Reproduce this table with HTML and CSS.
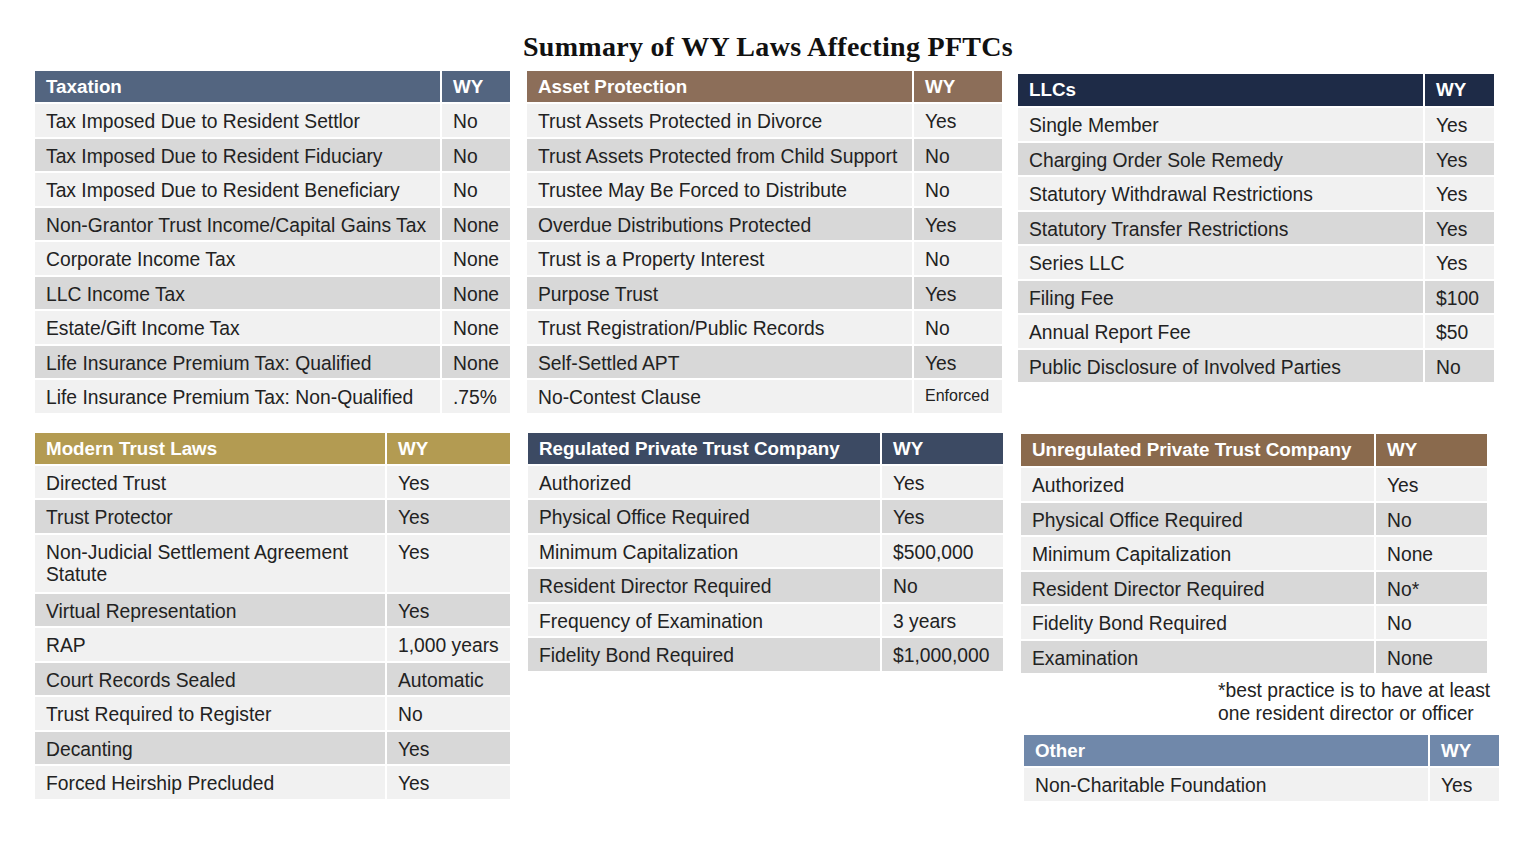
FILE: index.html
```html
<!DOCTYPE html>
<html>
<head>
<meta charset="utf-8">
<link rel="stylesheet" href="styles.css">
</head>
<body>
<h1 class="title">Summary of WY Laws Affecting PFTCs</h1>
<div class="board">
  <div class="col col-1">
    <div class="tbl tbl-tax">
      <div class="hd">Taxation</div><div class="hd">WY</div>
      <div class="c">Tax Imposed Due to Resident Settlor</div><div class="c">No</div>
      <div class="c">Tax Imposed Due to Resident Fiduciary</div><div class="c">No</div>
      <div class="c">Tax Imposed Due to Resident Beneficiary</div><div class="c">No</div>
      <div class="c">Non-Grantor Trust Income/Capital Gains Tax</div><div class="c">None</div>
      <div class="c">Corporate Income Tax</div><div class="c">None</div>
      <div class="c">LLC Income Tax</div><div class="c">None</div>
      <div class="c">Estate/Gift Income Tax</div><div class="c">None</div>
      <div class="c">Life Insurance Premium Tax: Qualified</div><div class="c">None</div>
      <div class="c">Life Insurance Premium Tax: Non-Qualified</div><div class="c">.75%</div>
    </div>
    <div class="tbl tbl-modern">
      <div class="hd">Modern Trust Laws</div><div class="hd">WY</div>
      <div class="c">Directed Trust</div><div class="c">Yes</div>
      <div class="c">Trust Protector</div><div class="c">Yes</div>
      <div class="c tall">Non-Judicial Settlement Agreement Statute</div><div class="c tall">Yes</div>
      <div class="c">Virtual Representation</div><div class="c">Yes</div>
      <div class="c">RAP</div><div class="c">1,000 years</div>
      <div class="c">Court Records Sealed</div><div class="c">Automatic</div>
      <div class="c">Trust Required to Register</div><div class="c">No</div>
      <div class="c">Decanting</div><div class="c">Yes</div>
      <div class="c">Forced Heirship Precluded</div><div class="c">Yes</div>
    </div>
  </div>
  <div class="col col-2">
    <div class="tbl tbl-asset">
      <div class="hd">Asset Protection</div><div class="hd">WY</div>
      <div class="c">Trust Assets Protected in Divorce</div><div class="c">Yes</div>
      <div class="c">Trust Assets Protected from Child Support</div><div class="c">No</div>
      <div class="c">Trustee May Be Forced to Distribute</div><div class="c">No</div>
      <div class="c">Overdue Distributions Protected</div><div class="c">Yes</div>
      <div class="c">Trust is a Property Interest</div><div class="c">No</div>
      <div class="c">Purpose Trust</div><div class="c">Yes</div>
      <div class="c">Trust Registration/Public Records</div><div class="c">No</div>
      <div class="c">Self-Settled APT</div><div class="c">Yes</div>
      <div class="c">No-Contest Clause</div><div class="c small">Enforced</div>
    </div>
    <div class="tbl tbl-reg">
      <div class="hd">Regulated Private Trust Company</div><div class="hd">WY</div>
      <div class="c">Authorized</div><div class="c">Yes</div>
      <div class="c">Physical Office Required</div><div class="c">Yes</div>
      <div class="c">Minimum Capitalization</div><div class="c">$500,000</div>
      <div class="c">Resident Director Required</div><div class="c">No</div>
      <div class="c">Frequency of Examination</div><div class="c">3 years</div>
      <div class="c">Fidelity Bond Required</div><div class="c">$1,000,000</div>
    </div>
  </div>
  <div class="col col-3">
    <div class="tbl tbl-llc">
      <div class="hd">LLCs</div><div class="hd">WY</div>
      <div class="c">Single Member</div><div class="c">Yes</div>
      <div class="c">Charging Order Sole Remedy</div><div class="c">Yes</div>
      <div class="c">Statutory Withdrawal Restrictions</div><div class="c">Yes</div>
      <div class="c">Statutory Transfer Restrictions</div><div class="c">Yes</div>
      <div class="c">Series LLC</div><div class="c">Yes</div>
      <div class="c">Filing Fee</div><div class="c">$100</div>
      <div class="c">Annual Report Fee</div><div class="c">$50</div>
      <div class="c">Public Disclosure of Involved Parties</div><div class="c">No</div>
    </div>
    <div class="tbl tbl-unreg">
      <div class="hd">Unregulated Private Trust Company</div><div class="hd">WY</div>
      <div class="c">Authorized</div><div class="c">Yes</div>
      <div class="c">Physical Office Required</div><div class="c">No</div>
      <div class="c">Minimum Capitalization</div><div class="c">None</div>
      <div class="c">Resident Director Required</div><div class="c">No*</div>
      <div class="c">Fidelity Bond Required</div><div class="c">No</div>
      <div class="c">Examination</div><div class="c">None</div>
    </div>
    <p class="note">*best practice is to have at least<br>one resident director or officer</p>
    <div class="tbl tbl-other">
      <div class="hd">Other</div><div class="hd">WY</div>
      <div class="c">Non-Charitable Foundation</div><div class="c">Yes</div>
    </div>
  </div>
</div>
</body>
</html>
```
FILE: styles.css
```css
html, body {
  margin: 0;
  padding: 0;
  background: #ffffff;
}
body {
  width: 1536px;
  height: 864px;
  overflow: hidden;
  font-family: "Liberation Sans", Arial, sans-serif;
  color: #222222;
}
.title {
  margin: 0;
  padding-top: 30px;
  height: 34px;
  text-align: center;
  font-family: "Liberation Serif", "Times New Roman", serif;
  font-weight: bold;
  font-size: 28px;
  line-height: 34px;
  color: #111111;
  letter-spacing: 0.3px;
}
.board {
  display: flex;
  padding-top: 7px;
  padding-left: 35px;
}
.col {
  display: flex;
  flex-direction: column;
}
.col-1 { width: 475px; }
.col-2 { width: 476px; margin-left: 17px; }
.col-3 { width: 481px; margin-left: 15px; }

.tbl {
  display: grid;
  column-gap: 2px;
  row-gap: 2px;
}
.hd {
  height: 31px;
  line-height: 31px;
  padding: 0 11px;
  font-weight: bold;
  font-size: 18.8px;
  color: #ffffff;
  white-space: nowrap;
}
.c {
  padding: 7px 11px 3px;
  font-size: 19.3px;
  line-height: 22.5px;
  background: #f1f1f1;
}
.c.tall {
  padding-bottom: 5px;
}
.c.small {
  font-size: 16px;
  line-height: 20px;
  padding-top: 6px;
  padding-bottom: 6.5px;
}
.tbl > .c:nth-child(4n+5),
.tbl > .c:nth-child(4n+6) {
  background: #d8d8d8;
}

.tbl-tax { grid-template-columns: 1fr 68px; }
.tbl-tax .hd { background: #536580; }

.tbl-modern { grid-template-columns: 1fr 123px; margin-top: 20px; }
.tbl-modern .hd { background: #b39b52; }

.tbl-asset { grid-template-columns: 1fr 88px; width: 475px; }
.tbl-asset .hd { background: #8c6e59; }

.tbl-reg { grid-template-columns: 1fr 121px; margin-top: 20px; margin-left: 1px; width: 475px; }
.tbl-reg .hd { background: #3c4a63; }

.tbl-llc { grid-template-columns: 1fr 69px; width: 476px; margin-top: 3px; }
.tbl-llc .hd { background: #1e2b47; height: 32px; line-height: 32px; }

.tbl-unreg { grid-template-columns: 1fr 111px; width: 466px; margin-left: 3px; margin-top: 52px; }
.tbl-unreg .hd { background: #8a6a4d; height: 32px; line-height: 32px; }

.note {
  margin: 7px 0 0 200px;
  font-size: 19.3px;
  line-height: 22.5px;
  color: #222222;
}
.tbl-other { grid-template-columns: 1fr 69px; width: 475px; margin-left: 6px; margin-top: 10px; }
.tbl-other .hd { background: #7088aa; }
```
